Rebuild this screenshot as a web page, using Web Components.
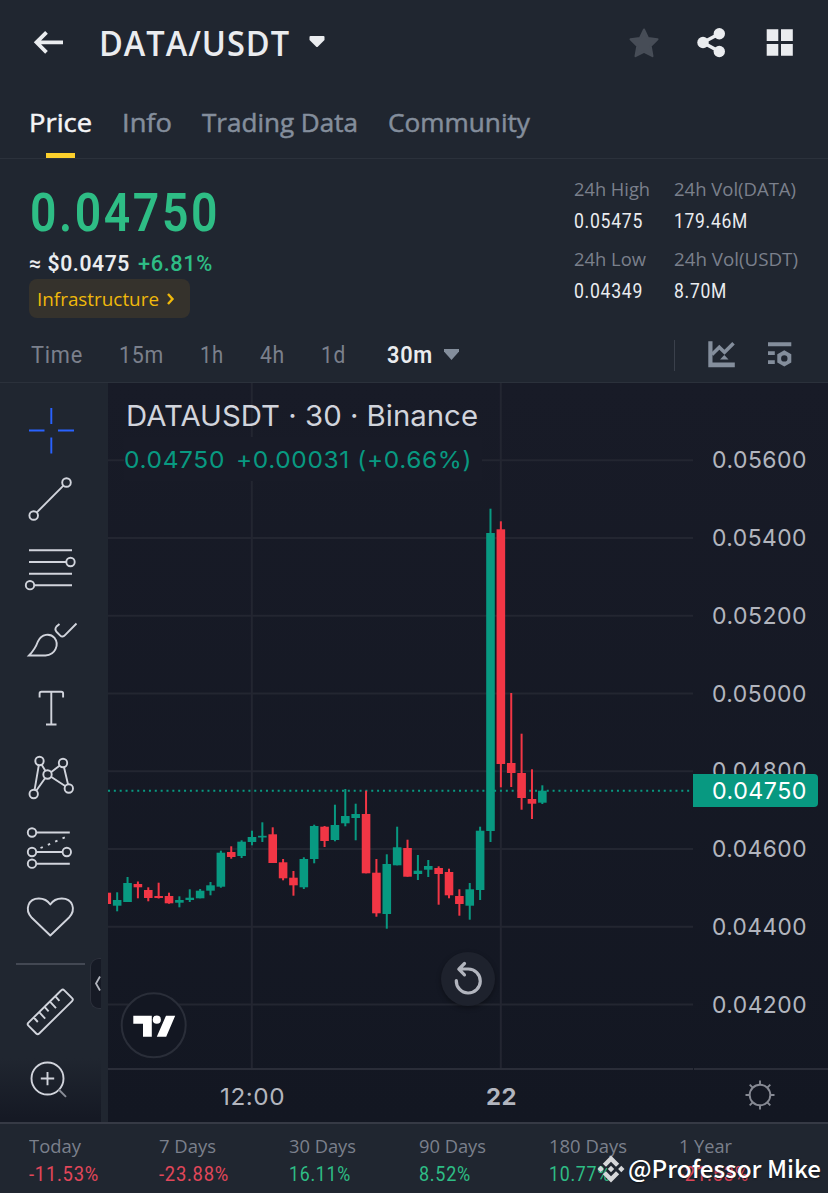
<!DOCTYPE html>
<html lang="en">
<head>
<meta charset="utf-8">
<title>DATA/USDT</title>
<style>
  :root {
    --bg: #202630;
    --line: #2b313b;
    --text: #eaecef;
    --muted: #848e9c;
    --dim: #7b808c;
    --green: #2ebd85;
    --red: #e2475a;
    --up: #089981;
    --down: #f23645;
    --label-font: "Open Sans", "Noto Sans", sans-serif;
    --number-font: Roboto, "Liberation Sans", sans-serif;
    --chart-font: Inter, "Liberation Sans", sans-serif;
  }
  html, body { margin: 0; padding: 0; }
  body {
    width: 828px;
    height: 1193px;
    overflow: hidden;
    position: relative;
    background: var(--bg);
    color: var(--text);
    font-family: var(--label-font);
  }
  .workspace { display: flex; height: 739px; }
</style>
</head>
<body>
  <market-header>DATA/USDT</market-header>
  <tab-bar></tab-bar>
  <price-summary></price-summary>
  <interval-bar></interval-bar>
  <div class="workspace">
    <drawing-toolbar></drawing-toolbar>
    <trading-chart></trading-chart>
  </div>
  <performance-bar></performance-bar>
  <author-mark>@Professor Mike</author-mark>

<script>
// Base class: puts the markup returned by render() in an open shadow root
class BaseElement extends HTMLElement {
  constructor() {
    super();
    this.attachShadow({ mode: 'open' });
    this.shadowRoot.innerHTML = this.render();
  }
}

// Single line of text, squeezed or stretched to the width attribute
class FitLabel extends BaseElement {
  render() {
    return `
      <style>
        :host { display: inline-block; flex: none; white-space: nowrap; vertical-align: top; }
        span { display: inline-block; transform-origin: 0 50%; vertical-align: top; }
      </style>
      <span><slot></slot></span>
    `;
  }

  connectedCallback() {
    const width = Number(this.getAttribute('width'));
    const span = this.shadowRoot.querySelector('span');
    const natural = span.getBoundingClientRect().width;
    this.style.width = width + 'px';
    if (natural > 0) span.style.transform = `scaleX(${width / natural})`;
  }
}

class MarketHeader extends BaseElement {
  render() {
    return `
      <style>
        :host { display: flex; align-items: center; height: 86px; padding: 0 33px 0 33px; }
        svg { flex: none; display: block; }
        fit-label { margin-left: 35px; font-size: 33.5px; font-weight: 600; line-height: 86px; letter-spacing: 1px; }
        .caret { margin-left: 18px; }
        .actions { display: flex; gap: 38px; margin-left: auto; }
      </style>
      <svg width="31" height="30" viewBox="33 27.7 31 30"><path d="M46.5 32 36.5 42l10 10M37 42h26" fill="none" stroke="#eaecef" stroke-width="3.8"/></svg>
      <fit-label width="191"><slot></slot></fit-label>
      <svg class="caret" width="17" height="16" viewBox="308.500 36 17 16"><path d="M311 37h13q1 0 1 1v3l-6.5 6.5q-1 1-2 0L310 41v-3q0-1 1-1z" fill="#eaecef"/></svg>
      <div class="actions">
        <svg width="30" height="30" viewBox="629 28 30 30"><path d="M644 29.5l4 8.5 9.500 1.300-6.800 6.700 1.800 10.200-8.500-4.400-8.500 4.400 1.800-10.200-6.800-6.700 9.500-1.300z" fill="#474d57" stroke="#474d57" stroke-width="2" stroke-linejoin="round"/></svg>
        <svg width="30" height="30" viewBox="697 28 30 30"><g fill="#eaecef"><circle cx="719.3" cy="33.7" r="5.7"/><circle cx="703" cy="42.5" r="5.7"/><circle cx="719.3" cy="51.5" r="5.7"/></g><path d="M719.3 33.7 703 42.5l16.3 9" fill="none" stroke="#eaecef" stroke-width="3.5"/></svg>
        <svg width="30" height="30" viewBox="765 28 30 30"><path d="M766.7 29.3h11.6v11.7h-11.6zM781 29.3h11.8v11.7H781zM766.7 44h11.6v11.7h-11.6zM781 44h11.8v11.7H781z" fill="#eaecef"/></svg>
      </div>
    `;
  }
}

class TabBar extends BaseElement {
  render() {
    return `
      <style>
        :host { display: flex; gap: 30px; height: 72px; padding-left: 29px; border-bottom: 1px solid var(--line); }
        div { display: flex; flex-direction: column; align-items: center; padding-top: 6px; }
        fit-label { height: 61px; line-height: 61px; font-size: 26px; color: var(--muted); -webkit-text-stroke: .5px currentColor; }
        .active fit-label { color: #f5f5f7; }
        .active::after { content: ''; width: 29px; height: 5px; background: #fcd02c; }
      </style>
      <div class="active"><fit-label width="63">Price</fit-label></div>
      <div><fit-label width="50">Info</fit-label></div>
      <div><fit-label width="156">Trading Data</fit-label></div>
      <div><fit-label width="142">Community</fit-label></div>
    `;
  }
}

class PriceSummary extends BaseElement {
  render() {
    return `
      <style>
        :host { display: flex; height: 169px; font-family: var(--number-font); }
        .quote { width: 574px; padding: 22px 0 0 29px; box-sizing: border-box; }
        .last { display: block; height: 62px; margin-left: 1px; line-height: 62px; font-size: 54.5px; font-weight: 600; letter-spacing: 3px; color: var(--green); }
        .change { display: flex; gap: 8px; height: 32px; margin-top: 4px; line-height: 34px; font-size: 22px; font-weight: 600; letter-spacing: .6px; }
        .up { color: var(--green); font-weight: 500; }
        .tag { display: flex; align-items: center; width: 153px; height: 39px; padding-left: 8px; border-radius: 8px; background: #35322c; color: #f0b90b; font: 19px/38px var(--label-font); }
        .tag svg { margin-left: 7px; }
        .stats { display: grid; grid-template-columns: 100px auto; padding-top: 15px; align-content: start; }
        dl { margin: 0 0 9px; }
        dt { height: 31px; line-height: 31px; font-family: var(--label-font); font-size: 19px; color: var(--dim); }
        dd { margin: 0; height: 30px; line-height: 33px; font-size: 19.5px; letter-spacing: .8px; }
      </style>
      <div class="quote">
        <fit-label class="last" width="190">0.04750</fit-label>
        <div class="change"><fit-label width="101">≈ $0.0475</fit-label><fit-label class="up" width="75">+6.81%</fit-label></div>
        <div class="tag"><fit-label width="122">Infrastructure</fit-label><svg width="10" height="14" viewBox="0 0 10 14"><path d="M2 2l4.500 5L2 12" fill="none" stroke="#f0b90b" stroke-width="2.4"/></svg></div>
      </div>
      <div class="stats">
        <dl><dt><fit-label width="76">24h High</fit-label></dt><dd><fit-label width="69">0.05475</fit-label></dd></dl>
        <dl><dt><fit-label width="122">24h Vol(DATA)</fit-label></dt><dd><fit-label width="74">179.46M</fit-label></dd></dl>
        <dl><dt><fit-label width="72">24h Low</fit-label></dt><dd><fit-label width="69">0.04349</fit-label></dd></dl>
        <dl><dt><fit-label width="124">24h Vol(USDT)</fit-label></dt><dd><fit-label width="53">8.70M</fit-label></dd></dl>
      </div>
    `;
  }
}

class IntervalBar extends BaseElement {
  render() {
    return `
      <style>
        :host { display: flex; align-items: center; height: 54px; padding: 0 33px 0 31px; border-bottom: 1px solid var(--line); font-family: var(--number-font); font-size: 23px; line-height: 56px; letter-spacing: .8px; color: var(--dim); }
        .intervals { display: flex; gap: 36px; height: 54px; }
        .selected { font-weight: 600; color: var(--text); margin-left: 5px; }
        .caret { margin-left: 10px; }
        .tools { display: flex; align-items: center; gap: 32px; margin-left: auto; }
        .tools i { width: 1px; height: 31px; background: #3a404b; }
        .tools svg { margin-top: -2px; }
        .tools svg:last-child { margin-left: -2px; }
        svg { display: block; }
      </style>
      <div class="intervals">
        <fit-label width="52">Time</fit-label>
        <fit-label width="45">15m</fit-label>
        <fit-label width="24">1h</fit-label>
        <fit-label width="25">4h</fit-label>
        <fit-label width="25">1d</fit-label>
        <fit-label class="selected" width="46">30m</fit-label>
      </div>
      <svg class="caret" width="17" height="14" viewBox="0 0 17 14"><path d="M1 1h15v2.500L8.500 12 1 3.500z" fill="#848e9c"/></svg>
      <div class="tools">
        <i></i>
        <svg width="30" height="28" viewBox="707 340 30 28"><path d="M708.3 341.2h4.2v21.2h22.3v4.8h-26.500z" fill="#848e9c"/><path d="M712 354.500l7.300-7.200 5.200 5 9-9" fill="none" stroke="#848e9c" stroke-width="3.6"/><path d="M720 359.500l4.300-4.500 4.200 4.500z" fill="#848e9c"/></svg>
        <svg width="28" height="28" viewBox="767 340 28 28"><g fill="#848e9c"><path d="M768 342.200h23.300v4H768zM768 351.300h6.800v3.700H768zM768 360.300h6.800v3.700H768z"/><path fill-rule="evenodd" d="M784.3 350.3l7 4v8.300l-7 4-7-4v-8.300zM784.3 355.2a3.200 3.200 0 1 0 0 6.400 3.200 3.200 0 0 0 0-6.400z"/></g></svg>
      </div>
    `;
  }
}

// Every tool is a 101x70 cell; the shapes use the coordinates of the whole screen
const TOOLS = [
  { y: 395, art: '<path stroke="#2962ff" d="M51.3 408v16M51.3 437.5v16M29 430.5h15.500M58 430.5h16"/>' },
  { y: 465, art: '<circle cx="66.5" cy="482.5" r="4.3"/><circle cx="33.7" cy="515.5" r="4.3"/><path d="M36.8 512.4 63.4 485.6"/>' },
  { y: 535, art: '<path d="M29 550.3h43M29 562h37M29 573.7h43M34.5 585.2h37.5"/><circle cx="70.5" cy="562" r="4.2"/><circle cx="30" cy="585.2" r="4.2"/>' },
  { y: 605, art: '<path d="M29 655.500c5-5 7.500-10 9-14.200 3.500-7.500 12-8.500 16.500-3.500 5 6.500 1 17.200-9 17.700zM59.5 624l-3 2.500c-2 2.500-1.200 4 .2 5.500l3.300 3.300c1.800 1.800 3.500 1.500 5-.1L76.500 623.5"/>' },
  { y: 675, art: '<path d="M39.6 697.5v-4q0-1.800 1.800-1.800h19.900q1.800 0 1.800 1.800v4M51.3 691.7v32.800M46 724.5h10.500"/>' },
  { y: 745, art: '<path d="M38.8 765.2l-4.200 24.600M41.5 764.6l4 6.300M51 772.2l8.500-6.500M64 767.2l4 17.100M51 776.8l14.500 9.400M36.4 790.5l8.800-12.500"/><circle cx="39.5" cy="761" r="4.2"/><circle cx="63" cy="763" r="4.2"/><circle cx="47.5" cy="774.5" r="4.2"/><circle cx="33.7" cy="794" r="4.2"/><circle cx="68.8" cy="788.5" r="4.2"/>' },
  { y: 815, art: '<path d="M36.3 832.5h33.500M36.3 852h26M36.3 863.7h33.500"/><path stroke-dasharray="2.5 5.5" d="M40.5 848 67 836.5"/><circle cx="32" cy="832.5" r="4.2"/><circle cx="32" cy="852" r="4.2"/><circle cx="66.8" cy="852" r="4.2"/><circle cx="32" cy="863.7" r="4.2"/>' },
  { y: 885, art: '<path stroke-linejoin="round" d="M50.3 935.5 31.800 917.800C24 909.500 28.500 898.500 38.800 898.500c5 0 9 2.200 11.500 6 2.500-3.800 6.500-6 11.500-6 10.500 0 15 11 7 19.300z"/>' },
  { y: 975, art: '<path stroke-linejoin="round" d="M61.3 990.3q1.500-1.500 3 0l7.800 7.800q1.500 1.500 0 3L39.2 1033.5q-1.500 1.500-3 0l-7.800-7.800q-1.500-1.500 0-3zM33.8 1017.5l4 4.500M39.2 1012.2l6 6.500M44.6 1006.9l4 4.500M50 1001.6l6 6.500M55.4 996.3l4 4.500"/>' },
  { y: 1045, art: '<circle cx="47.5" cy="1078.5" r="16"/><path d="M47.5 1072v13.300M40.8 1078.5h13.400"/><path stroke="#8a8e98" d="M58.7 1089.5l7.300 7.300"/>' }
];

class DrawingToolbar extends BaseElement {
  render() {
    const cells = TOOLS.map((tool, i) => `
      ${i === 8 ? '<hr>' : ''}
      <svg width="101" height="70" viewBox="0 ${tool.y} 101 70" fill="none" stroke="#d1d4dc" stroke-width="1.9">${tool.art}</svg>
    `).join('');

    return `
      <style>
        :host { display: block; position: relative; width: 101px; height: 739px; margin-right: 7px; background: linear-gradient(#202630 0 675px, #151924 735px); }
        .tools { display: flex; flex-direction: column; padding-top: 12px; }
        svg { display: block; }
        hr { width: 69px; height: 2px; margin: 8px 16px 10px; border: 0; background: #434853; }
        .collapse { position: absolute; right: 0; top: 575px; width: 10px; height: 49px; border: 1px solid #2d313c; border-right: 0; border-radius: 9px 0 0 9px; background: #161a25; }
      </style>
      <div class="tools">${cells}</div>
      <div class="collapse"><svg width="10" height="49" viewBox="0 0 10 49"><path d="M9 17.500 5 24.500l4 7" fill="none" stroke="#b2b5be" stroke-width="1.8"/></svg></div>
    `;
  }
}

// [direction, high, body top, body bottom, low] as y positions, one per 30 minutes
const CANDLES = [
  ['d', 892, 892.7, 904, 904],
  ['u', 892.3, 900, 905.7, 911.3],
  ['u', 877, 883, 902, 902],
  ['d', 881.5, 884, 887.3, 898.3],
  ['d', 887.3, 890, 898, 901.3],
  ['d', 882.7, 896, 898, 898.5],
  ['d', 892.7, 896, 903.3, 903.7],
  ['u', 896.3, 900, 902.7, 907.3],
  ['u', 889.3, 897.7, 900, 902],
  ['u', 889, 890.7, 898.3, 898.3],
  ['u', 882, 885.3, 890.7, 895.3],
  ['u', 850.7, 852.7, 886.7, 887.7],
  ['d', 846.3, 852, 857, 858.7],
  ['u', 840.3, 841.7, 856, 858],
  ['u', 830.7, 837, 842, 845.3],
  ['u', 822.3, 835.8, 837.5, 842],
  ['d', 827.3, 834.3, 863, 863],
  ['d', 859, 862.3, 878.3, 880.3],
  ['d', 871, 877.7, 885.3, 895.7],
  ['u', 857.3, 859, 887.3, 889],
  ['u', 824.7, 826, 859, 863.3],
  ['d', 826, 826.7, 841, 847],
  ['u', 804.7, 825, 840, 841.3],
  ['u', 789, 816, 823.3, 826.3],
  ['u', 803.7, 814, 818, 840.3],
  ['d', 790.7, 814, 873.3, 873.3],
  ['d', 859, 872.7, 913.3, 916.7],
  ['u', 854.3, 864, 914, 928.7],
  ['u', 826.7, 847.3, 865.3, 865.3],
  ['d', 839.7, 848, 876.7, 876.7],
  ['u', 855, 870.7, 874, 880],
  ['u', 860, 866, 869.7, 877],
  ['d', 866.3, 868, 874, 904.7],
  ['d', 868.7, 872, 895.3, 898.3],
  ['d', 889.3, 896, 904, 915.7],
  ['u', 883, 889.3, 905.7, 919.7],
  ['u', 826.7, 830.7, 890, 900],
  ['u', 508.7, 533, 831, 842],
  ['d', 521.3, 529.3, 764, 787.3],
  ['d', 693, 763, 773, 787],
  ['d', 733.7, 773, 798, 809.7],
  ['d', 769.3, 799, 803.7, 819],
  ['u', 785.3, 790.7, 802.7, 804]
];
const FIRST_CANDLE_X = 106.8;
const CANDLE_STEP = 10.37;
const PRICES = ['0.05600', '0.05400', '0.05200', '0.05000', '0.04800', '0.04600', '0.04400', '0.04200'];

class TradingChart extends BaseElement {
  render() {
    const grid = PRICES.map((price, i) => `<path d="M108 ${460.3 + i * 77.75}H693"/>`).join('');
    const candles = CANDLES.map(([dir, high, top, bottom, low], i) => {
      const x = FIRST_CANDLE_X + i * CANDLE_STEP;
      return `<g fill="var(--${dir === 'u' ? 'up' : 'down'})">
        <rect x="${x - 1}" y="${high}" width="2" height="${low - high}"/>
        <rect x="${x - 4.3}" y="${top}" width="8.6" height="${bottom - top}"/>
      </g>`;
    }).join('');

    return `
      <style>
        :host { display: block; position: relative; width: 720px; height: 739px; background: linear-gradient(#181b27, #131722); font-family: var(--chart-font); }
        svg { display: block; }
        .pane { display: flex; height: 685px; }
        .scale { display: flex; flex-direction: column; width: 135px; padding: 38.4px 0 0 19px; box-sizing: border-box; }
        .scale fit-label { height: 77.75px; line-height: 77.75px; font-size: 23.5px; letter-spacing: .5px; color: #b2b5be; }
        .bottom { display: flex; height: 54px; color: #b2b5be; font-size: 23.5px; line-height: 53px; }
        .times { display: flex; width: 585px; padding-left: 112px; box-sizing: border-box; gap: 201px; border-top: 2px solid #2a2d38; }
        .times fit-label { letter-spacing: .5px; }
        .times b { font-weight: 700; }
        .corner { flex: 1; margin-left: 1px; padding: 8px 0 0 49px; border-top: 2px solid #2a2d38; }
        .legend { position: absolute; left: 15px; top: 13px; width: 361px; height: 84px; padding-left: 3px; }
        .symbol { display: block; height: 41px; line-height: 39px; font-size: 29px; color: #d1d4dc; }
        .values { display: flex; gap: 11px; width: 358px; height: 44px; margin-left: -2px; line-height: 46px; font-size: 23.5px; letter-spacing: .6px; color: var(--up); background: #181b27; }
        .price { position: absolute; left: 585px; top: 391px; width: 106px; height: 33px; padding-left: 19px; border-radius: 0 4px 4px 0; background: var(--up); color: #fff; font-size: 23.5px; line-height: 34px; letter-spacing: .5px; }
        .logo { position: absolute; left: 12px; top: 608px; }
        .reset { position: absolute; left: 333px; top: 569px; border-radius: 50%; box-shadow: 0 2px 5px rgba(0,0,0,.35); background: #1e222d; }
      </style>
      <div class="pane">
        <svg width="585" height="685" viewBox="108 383 585 685">
          <g stroke="#232631" stroke-width="2">${grid}<path d="M251.8 383V1068M500.8 383V1068"/></g>
          <path d="M108 790.8H693" stroke="#089981" stroke-width="2" stroke-dasharray="2 3.85"/>
          ${candles}
        </svg>
        <div class="scale">${PRICES.map(price => `<fit-label width="95">${price}</fit-label>`).join('')}</div>
      </div>
      <div class="bottom">
        <div class="times"><fit-label width="65">12:00</fit-label><fit-label width="31"><b>22</b></fit-label></div>
        <div class="corner">
          <svg width="34" height="34" viewBox="-17 -17 34 34" fill="none" stroke="#868993" stroke-width="1.9"><circle r="10.3"/><path d="M0-10.3V-14.5M0 10.3V14.5M-10.3 0H-14.5M10.3 0H14.5M-7.3-7.3l-3-3M7.3-7.3l3-3M-7.3 7.3l-3 3M7.3 7.3l3 3"/></svg>
        </div>
      </div>
      <div class="legend">
        <fit-label class="symbol" width="352">DATAUSDT · 30 · Binance</fit-label>
        <div class="values"><fit-label width="101">0.04750</fit-label><fit-label width="236">+0.00031 (+0.66%)</fit-label></div>
      </div>
      <div class="price"><fit-label width="95">0.04750</fit-label></div>
      <svg class="logo" width="68" height="68" viewBox="120 991 68 68"><circle cx="153.7" cy="1025.3" r="32" fill="#131722" stroke="#2a2e39" stroke-width="2"/><path d="M133.300 1015.7h18.500v21H143v-13h-9.700zM166 1015.7h9.200l-9 21h-9.400z" fill="#fff"/><circle cx="156.8" cy="1019.7" r="4.1" fill="#fff"/></svg>
      <svg class="reset" width="54" height="54" viewBox="441 952 54 54" fill="none" stroke="#b2b5be" stroke-width="3.2"><path stroke-linecap="round" stroke-linejoin="round" d="M456.3 980.5A12 12 0 1 0 468.3 969H459.5M464.5 963.5 458.8 969.2l5.700 5.600"/></svg>
    `;
  }
}

const PERFORMANCE = [
  ['Today', 52, '-11.53%', 70],
  ['7 Days', 57, '-23.88%', 70],
  ['30 Days', 67, '16.11%', 62],
  ['90 Days', 67, '8.52%', 52],
  ['180 Days', 78, '10.77%', 62],
  ['1 Year', 53, '-21.53%', 70]
];

class PerformanceBar extends BaseElement {
  render() {
    const items = PERFORMANCE.map(([name, nameWidth, value, valueWidth]) => `
      <div>
        <fit-label width="${nameWidth}">${name}</fit-label>
        <fit-label class="value ${value.startsWith('-') ? 'down' : 'up'}" width="${valueWidth}">${value}</fit-label>
      </div>
    `).join('');

    return `
      <style>
        :host { display: flex; height: 61px; padding: 8px 0 0 29px; border-top: 2px solid #363a45; font-size: 19px; line-height: 28px; color: var(--dim); }
        div { display: flex; flex-direction: column; flex: 0 0 130px; height: 56px; }
        .value { line-height: 29px; font-family: var(--number-font); font-size: 19.5px; letter-spacing: .8px; }
        .up { color: var(--green); }
        .down { color: var(--red); }
      </style>
      ${items}
    `;
  }
}

class AuthorMark extends BaseElement {
  render() {
    return `
      <style>
        :host { display: flex; align-items: center; gap: 3px; position: absolute; left: 597px; top: 1151px; height: 36px; font: 500 24px/34px "Noto Sans CJK SC", "Noto Sans", sans-serif; color: #fff; text-shadow: 0 1px 2px rgba(0,0,0,.5); }
        fit-label { height: 36px; }
      </style>
      <svg width="28" height="28" viewBox="-14 -14 28 28"><path d="M0-13.5 8.2-5.3 5-2.2 0-7.2-5-2.2-8.2-5.3zM0 13.5 8.2 5.3 5 2.2 0 7.2-5 2.2-8.2 5.3zM0-3.2 3.2 0 0 3.2-3.2 0zM-10.3-3.2-7.1 0l-3.2 3.2L-13.5 0zM10.3-3.2 13.5 0l-3.2 3.2L7.1 0z" fill="#d6d7d9"/></svg>
      <fit-label width="193"><slot></slot></fit-label>
    `;
  }
}

customElements.define('market-header', MarketHeader);
customElements.define('tab-bar', TabBar);
customElements.define('price-summary', PriceSummary);
customElements.define('interval-bar', IntervalBar);
customElements.define('drawing-toolbar', DrawingToolbar);
customElements.define('trading-chart', TradingChart);
customElements.define('performance-bar', PerformanceBar);
customElements.define('author-mark', AuthorMark);
// Last, so that the labels are measured with their final styles
customElements.define('fit-label', FitLabel);
</script>
</body>
</html>
